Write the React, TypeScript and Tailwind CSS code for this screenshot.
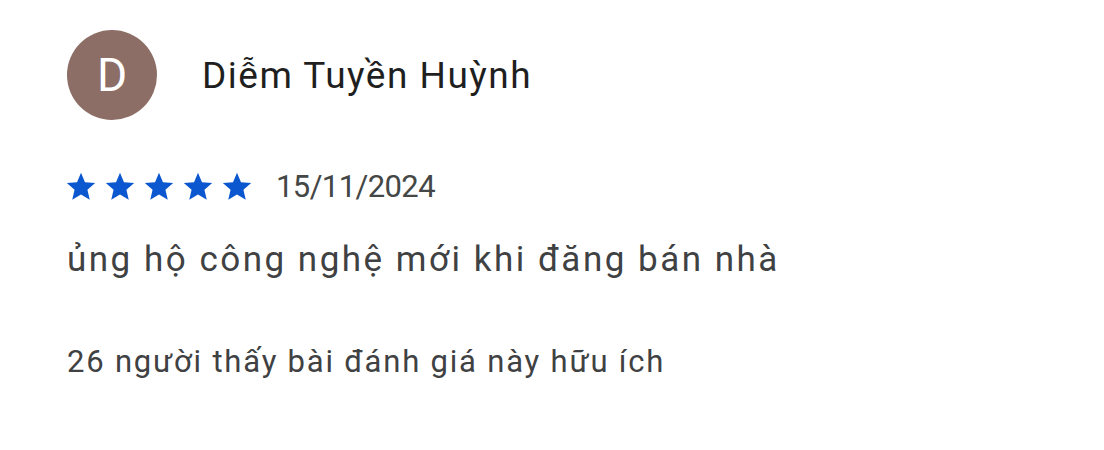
function Star() {
  return (
    <svg viewBox="0 0 24 24" className="w-[34px] h-[34px] fill-[#0b57d0]">
      <path d="M12 17.27 18.18 21l-1.64-7.03L22 9.24l-7.19-.61L12 2 9.19 8.63 2 9.24l5.46 4.73L5.82 21z" />
    </svg>
  );
}

export default function App() {
  return (
    <div className="w-[1104px] h-[450px] bg-white font-['Roboto',sans-serif] pl-[67px] pt-[30px]">
      <div className="flex items-center gap-[45px]">
        <div className="w-[90px] h-[90px] rounded-full bg-[#8d6e66] flex items-center justify-center text-white text-[46px] leading-none">
          D
        </div>
        <div className="text-[37px] leading-[37px] tracking-[1.5px] text-[#1f1f1f]">
          Diễm Tuyền Huỳnh
        </div>
      </div>

      <div className="flex items-center mt-[50px] h-[34px]">
        <div className="flex gap-[5px] -ml-[3px]">
          <Star />
          <Star />
          <Star />
          <Star />
          <Star />
        </div>
        <div className="ml-[22px] text-[31px] leading-[34px] tracking-[-0.6px] text-[#444746]">
          15/11/2024
        </div>
      </div>

      <div className="mt-[35px] text-[35px] leading-[42px] tracking-[2.5px] text-[#3f4143]">
        ủng hộ công nghệ mới khi đăng bán nhà
      </div>

      <div className="mt-[63px] text-[31px] leading-[36px] tracking-[1.8px] text-[#3f4143]">
        26 người thấy bài đánh giá này hữu ích
      </div>
    </div>
  );
}
